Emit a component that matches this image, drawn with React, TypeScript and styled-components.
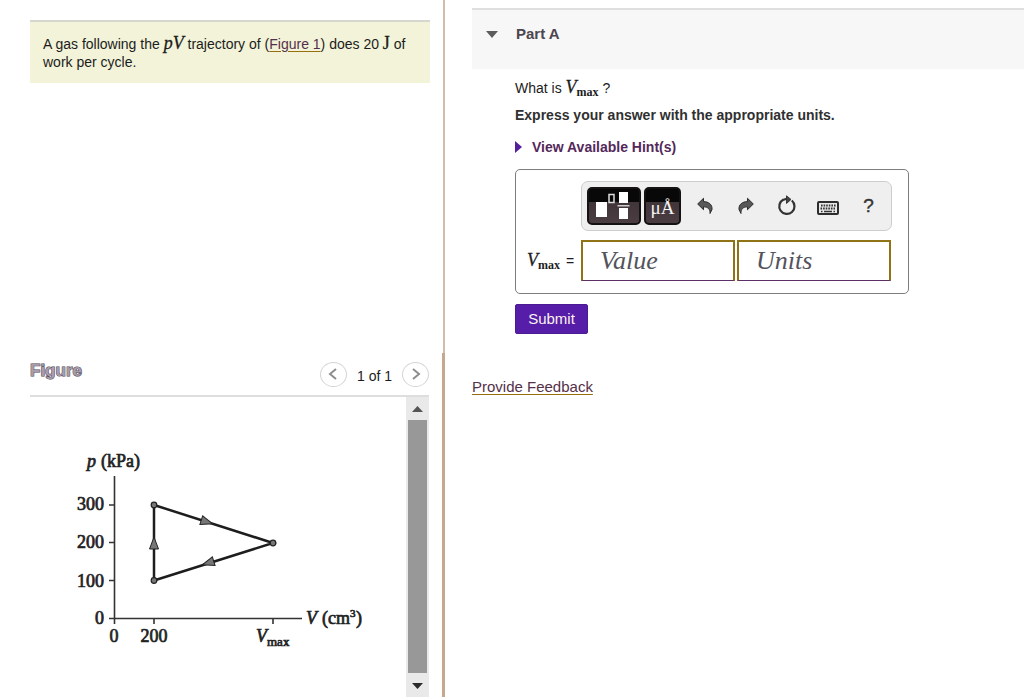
import React from "react";
import styled, { createGlobalStyle } from "styled-components";

const sans = `"Liberation Sans", Arial, sans-serif`;
const serif = `"Liberation Serif", "Times New Roman", serif`;

const GlobalStyle = createGlobalStyle`
  * { box-sizing: border-box; }
  body { margin: 0; background: #fff; color: #1c1c1c; font: 14px/18px ${sans}; }
  button, input { font-family: inherit; }
  p, h2, h3 { margin: 0; }
`;

const Page = styled.div`
  display: grid;
  grid-template-columns: minmax(0, 445fr) minmax(0, 579fr);
  min-height: 100vh;
`;

const LeftPane = styled.aside`
  display: grid;
  grid-template-rows: 353px minmax(300px, 1fr);
`;

const ProblemPane = styled.section`
  padding: 20px 13px 0 30px;
  border-right: 2px solid #d3bba9;
`;

const ProblemText = styled.p`
  padding: 12px 16px 12px 13px;
  border-top: 2px solid #d5d6cd;
  background: #f2f3d8;
`;

const TextLink = styled.a<{ $large?: boolean }>`
  color: #55304a;
  font-size: ${(p) => (p.$large ? 15 : 14)}px;
  text-decoration: underline;
  text-decoration-color: #96700f;
  text-underline-offset: 2px;
`;

const MathText = styled.span<{ $upright?: boolean }>`
  font-family: ${serif};
  font-size: 18px;
  line-height: 1;
  font-style: ${(p) => (p.$upright ? "normal" : "italic")};
  -webkit-text-stroke: 0.3px currentColor;
`;

const Subscript = styled.span`
  position: relative;
  top: 3px;
  font: bold 12px/1 ${serif};
`;

const FigurePane = styled.section`
  display: flex;
  flex-direction: column;
  padding: 0 13px 0 30px;
  border-right: 3px solid #c6a891;
`;

const FigureHeader = styled.header`
  display: flex;
  align-items: center;
  justify-content: space-between;
  height: 44px;
  border-bottom: 2px solid #dedede;
`;

const FigureTitle = styled.h2`
  padding-bottom: 6px;
  font-size: 17px;
  line-height: 20px;
  color: #a99cac;
  -webkit-text-stroke: 1px #48424c;
  paint-order: stroke fill;
`;

const Pager = styled.nav`
  display: flex;
  align-items: center;
  gap: 10px;
`;

const PageCount = styled.span`
  padding-top: 3px;
`;

const PagerButton = styled.button`
  display: grid;
  place-items: center;
  width: 27px;
  height: 25px;
  padding: 0;
  border: 1px solid #d4d4d4;
  border-radius: 50%;
  background: #fff;
`;

const FigureViewport = styled.div`
  flex: 1;
  display: flex;
  justify-content: space-between;
`;

const ChartArea = styled.div`
  padding: 43px 0 0 30px;
`;

const ChartSvg = styled.svg`
  display: block;
  font-family: ${serif};
  font-size: 18px;
  fill: #222;
`;

const ChartText = styled.text`
  stroke: #222;
  stroke-width: 0.7px;
`;

const ScrollTrack = styled.div`
  flex: none;
  display: flex;
  flex-direction: column;
  width: 23px;
  background: #e9e9e9;
`;

const ScrollButton = styled.button`
  display: grid;
  place-items: center;
  height: 23px;
  padding: 0;
  border: 0;
  background: transparent;
`;

const ScrollThumb = styled.div`
  flex: 1;
  margin: 0 2px 1px;
  background: #989898;
`;

const MainPane = styled.main`
  padding: 8px 0 0 27px;
`;

const PartHeader = styled.button`
  display: flex;
  align-items: flex-start;
  gap: 18px;
  width: 100%;
  height: 61px;
  padding: 15px 14px;
  border: 0;
  border-top: 2px solid #dedede;
  background: #f7f7f7;
  color: #4c464e;
  font-size: 15px;
  font-weight: bold;
  line-height: 18px;
`;

const PartArrow = styled.svg`
  margin-top: 6px;
`;

const PartBody = styled.form`
  display: flex;
  flex-direction: column;
  align-items: flex-start;
  padding: 9px 16px 0 43px;
`;

const Instruction = styled.p`
  margin: 9px 0 14px;
  font-weight: bold;
  color: #303030;
`;

const HintButton = styled.button`
  display: flex;
  align-items: center;
  gap: 10px;
  padding: 0;
  border: 0;
  background: none;
  color: #54285a;
  font-size: 14px;
  font-weight: bold;
  line-height: 18px;
`;

const AnswerBox = styled.div`
  display: grid;
  grid-template-columns: 54px minmax(0, 1fr);
  row-gap: 9px;
  align-items: center;
  width: 100%;
  max-width: 394px;
  margin: 13px 0 10px;
  padding: 11px 16px 12px 11px;
  border: 1px solid #7d7d7d;
  border-radius: 5px;
`;

const Toolbar = styled.div`
  grid-column: 2;
  display: flex;
  align-items: center;
  height: 50px;
  padding: 0 2px 0 5px;
  border: 1px solid #cdcdcd;
  border-radius: 7px;
  background: #efefef;
`;

const TemplateButton = styled.button<{ $width: number }>`
  flex: none;
  display: grid;
  place-items: center;
  width: ${(p) => p.$width}px;
  height: 38px;
  margin-right: 3px;
  padding: 0;
  border: 2px solid #151214;
  border-radius: 5px;
  background: linear-gradient(#080808 0 38%, #403539 38%, #4b3d42);
  color: #f4f4f4;
`;

const UnitSymbols = styled.span`
  padding-top: 4px;
  font: 19px/30px ${serif};
`;

const ToolButton = styled.button`
  flex: 1;
  display: grid;
  place-items: center;
  height: 38px;
  padding: 0;
  border: 0;
  background: none;
  color: #333;
  font-size: 19px;
  -webkit-text-stroke: 0.4px currentColor;
`;

const FieldLabel = styled.label`
  display: flex;
  align-items: baseline;
  color: #1c1c24;
`;

const Equals = styled.span`
  margin-left: 6px;
`;

const Fields = styled.div`
  display: grid;
  grid-template-columns: 1fr 1fr;
  gap: 2px;
  padding-right: 1px;
`;

const Field = styled.input`
  min-width: 0;
  width: 100%;
  height: 41px;
  padding: 0 17px;
  border: 2px solid #8f7316;
  border-bottom: 1px solid #5c2f68;
  background: #fff;
  font: italic 26px/36px ${serif};
  color: #222;
  &::placeholder { color: #53535c; opacity: 1; }
`;

const SubmitButton = styled.button`
  width: 73px;
  height: 30px;
  padding: 0 0 2px;
  border: 1px solid #4c1b91;
  border-radius: 2px;
  background: #561da8;
  color: #fbf3ee;
  font-size: 15px;
`;

const Footer = styled.footer`
  padding-top: 44px;
`;

function TriangleArrow({ x, y, angle }: { x: number; y: number; angle: number }) {
  return (
    <path
      d="M6 0L-6 -4.5V4.5Z"
      transform={`translate(${x} ${y}) rotate(${angle})`}
      fill="#777"
      stroke="#222"
      strokeWidth="1"
    />
  );
}

function CycleChart() {
  return (
    <ChartSvg width="320" height="220" viewBox="0 0 320 220" role="img" aria-label="Pressure against volume">
      <ChartText x="27" y="27" fontStyle="italic">p</ChartText>
      <ChartText x="41" y="27">(kPa)</ChartText>
      <ChartText x="44" y="70" textAnchor="end">300</ChartText>
      <ChartText x="44" y="108" textAnchor="end">200</ChartText>
      <ChartText x="44" y="147" textAnchor="end">100</ChartText>
      <ChartText x="44" y="184" textAnchor="end">0</ChartText>
      <ChartText x="54" y="202" textAnchor="middle">0</ChartText>
      <ChartText x="94" y="202" textAnchor="middle">200</ChartText>
      <ChartText x="196" y="202" fontStyle="italic">V</ChartText>
      <ChartText x="207" y="206" fontSize="13">max</ChartText>
      <ChartText x="246" y="184" fontStyle="italic">V</ChartText>
      <ChartText x="262" y="184">(cm</ChartText>
      <ChartText x="290" y="177" fontSize="11">3</ChartText>
      <ChartText x="296" y="184">)</ChartText>
      <path
        d="M54.5 36V184M49 178.500H242M49 65H54M49 102.500H54M49 140.500H54M94 178V184M213 178V184"
        fill="none"
        stroke="#333"
        strokeWidth="1.600"
      />
      <path d="M94 65L213 103L94 140.500Z" fill="none" stroke="#1d1d1d" strokeWidth="2.500" />
      <TriangleArrow x={147} y={82} angle={17.7} />
      <TriangleArrow x={148} y={123} angle={162.5} />
      <TriangleArrow x={94} y={103} angle={-90} />
      <g fill="#777" stroke="#222" strokeWidth="1.200">
        <circle cx="94" cy="65" r="2.800" />
        <circle cx="213" cy="103" r="2.800" />
        <circle cx="94" cy="140.500" r="2.800" />
      </g>
    </ChartSvg>
  );
}

function Chevron({ d }: { d: string }) {
  return (
    <svg width="12" height="14" viewBox="0 0 12 14" fill="none" stroke="#8d8d8d" strokeWidth="2">
      <path d={d} />
    </svg>
  );
}

function UndoIcon({ flip }: { flip?: boolean }) {
  return (
    <svg width="16" height="18" viewBox="0 0 16 18">
      <path
        transform={flip ? "translate(16 0) scale(-1 1)" : undefined}
        d="M.7 7L6.500 1.300V4.600C11.500 4.600 15.500 7.500 15 12.500L13 16.500C13.500 12.500 11 9.800 6.500 9.800V12.700Z"
        fill="#585858"
        stroke="#2b2b2b"
        strokeWidth="1"
        strokeLinejoin="round"
      />
    </svg>
  );
}

function ResetIcon() {
  return (
    <svg width="20" height="22" viewBox="0 0 20 22">
      <path d="M6.500 4.500A7.600 7.600 0 1 0 14.800 5.500" fill="none" stroke="#333" strokeWidth="2.200" />
      <path d="M9.500 .8L14 4.500L9.500 8.500Z" fill="#444" stroke="#222" strokeWidth=".8" />
      <path d="M6 5L9.500 3.800" stroke="#333" strokeWidth="2" />
    </svg>
  );
}

function KeyboardIcon() {
  return (
    <svg width="22" height="20" viewBox="0 0 22 20">
      <g transform="translate(0 5)">
        <rect x="1" y="1" width="20" height="12" rx="1" fill="#e8e8e8" stroke="#2d2d2d" strokeWidth="2" />
        <path d="M4 4.500H19M3.500 7.500H18" stroke="#333" strokeWidth="2" strokeDasharray="1.600 1" />
        <path d="M4 10.500H5.500M7 10.500H15M16.500 10.500H18" stroke="#333" strokeWidth="1.500" />
      </g>
    </svg>
  );
}

function TemplatesIcon() {
  return (
    <svg width="36" height="30" viewBox="0 0 36 30" fill="#fff">
      <rect x="0" y="11" width="11" height="15" />
      <rect x="13" y="3.500" width="5" height="8" fill="none" stroke="#ddd" strokeWidth="1.500" />
      <rect x="23" y="1" width="9" height="11" />
      <rect x="21.500" y="14" width="12" height="1.500" fill="#ccc" />
      <rect x="23" y="17" width="9" height="11" />
    </svg>
  );
}

export default function App() {
  return (
    <>
      <GlobalStyle />
      <Page>
        <LeftPane>
          <ProblemPane>
            <ProblemText>
              A gas following the <MathText>pV</MathText> trajectory of (
              <TextLink href="#figure">Figure 1</TextLink>) does 20 <MathText $upright>J</MathText> of
              work per cycle.
            </ProblemText>
          </ProblemPane>
          <FigurePane id="figure">
            <FigureHeader>
              <FigureTitle>Figure</FigureTitle>
              <Pager aria-label="Figures">
                <PagerButton type="button" aria-label="Previous figure"><Chevron d="M9 2L3 7L9 12" /></PagerButton>
                <PageCount>1 of 1</PageCount>
                <PagerButton type="button" aria-label="Next figure"><Chevron d="M3 2L9 7L3 12" /></PagerButton>
              </Pager>
            </FigureHeader>
            <FigureViewport>
              <ChartArea><CycleChart /></ChartArea>
              <ScrollTrack>
                <ScrollButton type="button" aria-label="Scroll up">
                  <svg width="11" height="6"><path d="M0 6L5.500 0L11 6Z" fill="#555" /></svg>
                </ScrollButton>
                <ScrollThumb />
                <ScrollButton type="button" aria-label="Scroll down">
                  <svg width="11" height="6"><path d="M0 0H11L5.500 6Z" fill="#2b2b2b" /></svg>
                </ScrollButton>
              </ScrollTrack>
            </FigureViewport>
          </FigurePane>
        </LeftPane>
        <MainPane>
          <PartHeader type="button" aria-expanded="true">
            <PartArrow width="12" height="7"><path d="M0 0H12L6 7Z" fill="#5c5c5c" /></PartArrow>
            Part A
          </PartHeader>
          <PartBody onSubmit={(e) => e.preventDefault()}>
            <p>
              What is <MathText>V</MathText><Subscript>max</Subscript> ?
            </p>
            <Instruction>Express your answer with the appropriate units.</Instruction>
            <HintButton type="button">
              <svg width="7" height="12"><path d="M0 0L7 6L0 12Z" fill="#54209a" /></svg>
              View Available Hint(s)
            </HintButton>
            <AnswerBox>
              <Toolbar role="toolbar" aria-label="Answer tools">
                <TemplateButton type="button" $width={54} aria-label="Templates"><TemplatesIcon /></TemplateButton>
                <TemplateButton type="button" $width={37} aria-label="Unit symbols"><UnitSymbols>μÅ</UnitSymbols></TemplateButton>
                <ToolButton type="button" aria-label="Undo"><UndoIcon /></ToolButton>
                <ToolButton type="button" aria-label="Redo"><UndoIcon flip /></ToolButton>
                <ToolButton type="button" aria-label="Reset"><ResetIcon /></ToolButton>
                <ToolButton type="button" aria-label="Keyboard shortcuts"><KeyboardIcon /></ToolButton>
                <ToolButton type="button" aria-label="Help">?</ToolButton>
              </Toolbar>
              <FieldLabel htmlFor="value">
                <MathText>V</MathText><Subscript>max</Subscript><Equals>=</Equals>
              </FieldLabel>
              <Fields>
                <Field id="value" placeholder="Value" />
                <Field aria-label="Units" placeholder="Units" />
              </Fields>
            </AnswerBox>
            <SubmitButton type="submit">Submit</SubmitButton>
          </PartBody>
          <Footer>
            <TextLink $large href="#feedback">Provide Feedback</TextLink>
          </Footer>
        </MainPane>
      </Page>
    </>
  );
}
